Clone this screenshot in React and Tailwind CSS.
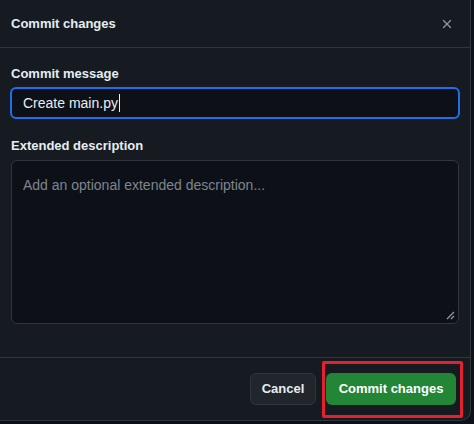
import { X } from "lucide-react";

export default function App() {
  return (
    <div
      className="h-[424px] w-[474px] overflow-hidden bg-[#0d1117]"
      style={{ fontFamily: '"Liberation Sans", Arial, sans-serif' }}
    >
      <div className="flex h-[421px] w-[471px] flex-col rounded-br-[10px] border-b border-r border-[#30363d] bg-[#161b22] text-[#e6edf3]">
        {/* header */}
        <div className="flex h-[48px] shrink-0 items-center justify-between border-b border-[#30363d] pl-[11px] pr-[16px]">
          <h2 className="text-[13px] font-bold">Commit changes</h2>
          <X className="h-[14px] w-[14px] text-[#9198a1]" strokeWidth={2.2} />
        </div>

        {/* body */}
        <div className="flex h-[309px] shrink-0 flex-col px-[10px] pt-[16px]">
          <label className="pl-[1px] text-[13px] font-bold leading-[20px]">
            Commit message
          </label>
          <div className="mt-[3px] flex h-[32px] items-center rounded-[6px] border-2 border-[#1f6feb] bg-[#0d1117] pl-[11px]">
            <span className="text-[14px] text-[#e6edf3]">Create main.py</span>
            <span className="ml-[1px] h-[18px] w-[1px] bg-[#e6edf3]" />
          </div>

          <label className="mt-[17px] pl-[1px] text-[13px] font-bold leading-[20px]">
            Extended description
          </label>
          <div className="relative ml-[1px] mr-[1px] mt-[4px] h-[164px] rounded-[6px] border border-[#30363d] bg-[#0d1117] px-[11px] pt-[12px]">
            <span className="text-[14px] text-[#7d8590]">
              Add an optional extended description...
            </span>
            <svg
              className="absolute bottom-[3px] right-[3px]"
              width="9"
              height="9"
              viewBox="0 0 9 9"
            >
              <path d="M1 8 L8 1 M5 8 L8 5" stroke="#9198a1" strokeWidth="1.3" />
            </svg>
          </div>
        </div>

        {/* footer */}
        <div className="flex flex-1 items-start justify-end gap-[6px] border-t border-[#30363d] pr-[7px] pt-[3px]">
          <button className="mt-[12px] h-[32px] w-[66px] rounded-[6px] border border-[#30363d] bg-[#21262d] text-[13px] font-bold text-[#e6edf3]">
            Cancel
          </button>
          <div className="rounded-[2px] border-[3px] border-[#e5202f] pb-[10px] pl-[1px] pr-[4px] pt-[9px]">
            <button className="h-[32px] w-[130px] rounded-[6px] bg-[#238636] text-[13px] font-bold text-white">
              Commit changes
            </button>
          </div>
        </div>
      </div>
    </div>
  );
}
